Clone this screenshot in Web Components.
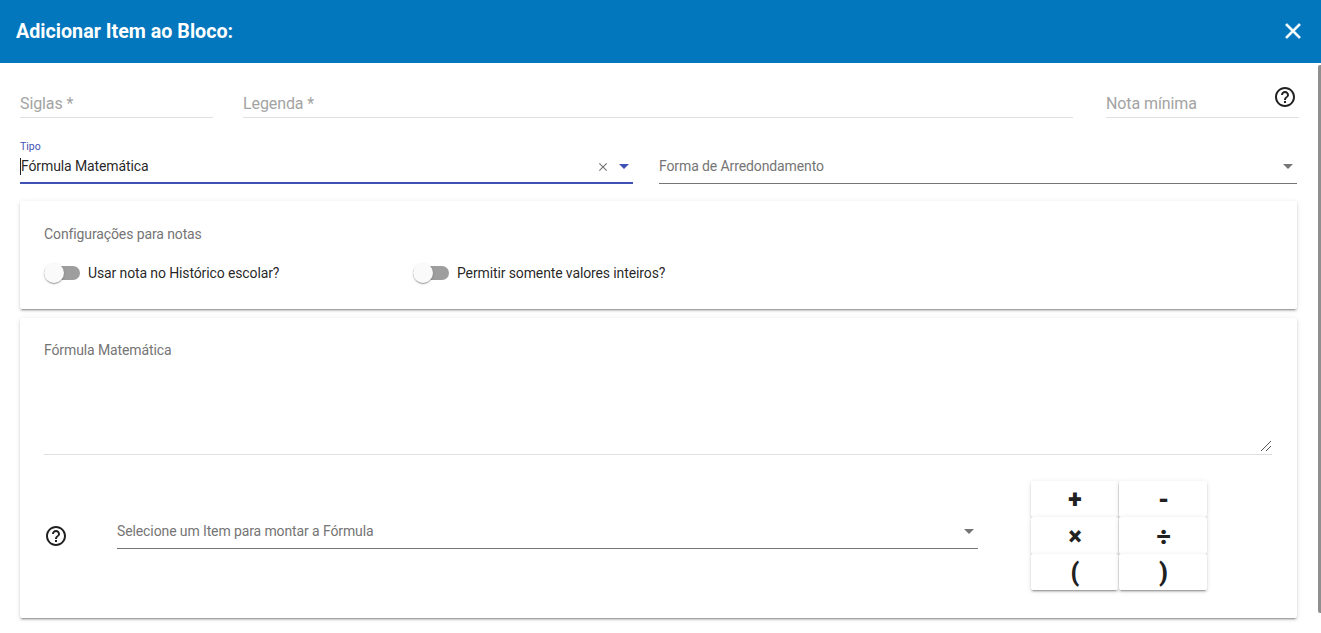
<!DOCTYPE html>
<html lang="pt">
<head>
<meta charset="utf-8">
<title>Adicionar Item ao Bloco</title>
<style>
  html, body { margin: 0; height: 100%; overflow: hidden; background: #fff; font-family: Roboto, "Liberation Sans", sans-serif; }
</style>
</head>
<body>
<item-dialog></item-dialog>

<script>
const HELP_PATH = 'M11 18h2v-2h-2v2zm1-16C6.48 2 2 6.48 2 12s4.48 10 10 10 10-4.48 10-10S17.52 2 12 2zm0 18c-4.41 0-8-3.59-8-8s3.59-8 8-8 8 3.59 8 8-3.59 8-8 8zm0-14c-2.21 0-4 1.79-4 4h2c0-1.1.9-2 2-2s2 .9 2 2c0 2-3 1.75-3 5h2c0-2.25 3-2.5 3-5 0-2.21-1.79-4-4-4z';

class HelpIcon extends HTMLElement {
  constructor(){
    super();
    this.attachShadow({mode:'open'});
    this.shadowRoot.innerHTML = `
      <style>
        :host{ display:block; width:24px; height:24px; }
        svg{ display:block; fill:rgba(0,0,0,.87); }
      </style>
      <svg width="24" height="24" viewBox="0 0 24 24"><path d="${HELP_PATH}"/></svg>`;
  }
}

class DialogBar extends HTMLElement {
  constructor(){
    super();
    this.attachShadow({mode:'open'});
    this.shadowRoot.innerHTML = `
      <style>
        :host{ display:flex; align-items:center; justify-content:space-between; height:63px; padding:0 15px 0 16px; background:#0277bd; color:#fff; }
        h2{ margin:-1px 0 0; font:700 19.7px Roboto, sans-serif; }
        svg{ display:block; fill:#fff; stroke:#fff; stroke-width:.5; margin-top:-1px; }
      </style>
      <h2><slot></slot></h2>
      <svg width="26" height="26" viewBox="0 0 24 24"><path d="M19 6.41L17.59 5 12 10.59 6.41 5 5 6.41 10.59 12 5 17.59 6.41 19 12 13.41 17.59 19 19 17.59 13.41 12z"/></svg>`;
  }
}

class TextField extends HTMLElement {
  constructor(){
    super();
    this.attachShadow({mode:'open'});
    this.shadowRoot.innerHTML = `
      <style>
        :host{ display:block; height:32px; border-bottom:1px solid #e0e0e0; box-sizing:content-box; color:#a3a3a3; font:16px/38px Roboto, sans-serif; letter-spacing:-.1px; }
        div{ height:32px; }
      </style>
      <div><slot></slot></div>`;
  }
}

class SelectField extends HTMLElement {
  constructor(){
    super();
    this.attachShadow({mode:'open'});
    const active = this.hasAttribute('active');
    const clear = active ? `<svg class="x" width="14" height="14" viewBox="0 0 24 24"><path d="M19 6.41L17.59 5 12 10.59 6.41 5 5 6.41 10.59 12 5 17.59 6.41 19 12 13.41 17.59 19 19 17.59 13.41 12z"/></svg>` : '';
    const label = this.getAttribute('label');
    this.shadowRoot.innerHTML = `
      <style>
        :host{ display:block; color:#757575; font:14px Roboto, sans-serif; letter-spacing:-.11px; }
        .top{ height:14px; padding-top:1px; margin-bottom:-1px; color:#3f51b5; font-size:10.5px; line-height:14px; letter-spacing:0; }
        .box{ display:flex; align-items:center; height:27px; padding-bottom:3px; border-bottom:1px solid #757575; }
        :host([active]) .box{ border-bottom:2px solid #3f51b5; height:27px; padding-bottom:2px; color:rgba(0,0,0,.87); }
        :host([active]) .text{ border-left:1px solid #222; margin-left:0; }
        .text{ flex:1; line-height:17px; min-width:0; }
        .x{ display:block; fill:#757575; margin-right:9px; }
        .arrow{ width:0; height:0; margin:0 4px 0 0; border:5px solid transparent; border-top-color:#757575; border-bottom-width:0; }
        :host([active]) .arrow{ border-top-color:#3f51b5; }
      </style>
      <div class="top">${label || ''}</div>
      <div class="box">
        <span class="text"><slot></slot></span>
        ${clear}
        <span class="arrow"></span>
      </div>`;
  }
}

class SwitchField extends HTMLElement {
  constructor(){
    super();
    this.attachShadow({mode:'open'});
    this.shadowRoot.innerHTML = `
      <style>
        :host{ display:inline-flex; align-items:center; height:20px; color:rgba(0,0,0,.87); font:14px Roboto, sans-serif; letter-spacing:-.12px; }
        .track{ position:relative; width:36px; height:14px; border-radius:7px; background:#9e9e9e; margin-right:8px; }
        .thumb{ position:absolute; left:0; top:-3px; width:20px; height:20px; border-radius:50%; background:#fafafa;
          box-shadow:0 2px 1px -1px rgba(0,0,0,.2),0 1px 1px 0 rgba(0,0,0,.14),0 1px 3px 0 rgba(0,0,0,.12); }
      </style>
      <span class="track"><span class="thumb"></span></span>
      <slot></slot>`;
  }
}

class PanelCard extends HTMLElement {
  constructor(){
    super();
    this.attachShadow({mode:'open'});
    this.shadowRoot.innerHTML = `
      <style>
        :host{ display:block; box-sizing:border-box; padding:24px; background:#fff; border-radius:2px;
          box-shadow:0 3px 1px -2px rgba(0,0,0,.2),0 2px 2px 0 rgba(0,0,0,.14),0 1px 5px 0 rgba(0,0,0,.12); }
        .title{ color:#757575; font:14px/17px Roboto, sans-serif; letter-spacing:-.11px; }
      </style>
      <div class="title">${this.getAttribute('heading')}</div>
      <slot></slot>`;
  }
}

class OpButtons extends HTMLElement {
  constructor(){
    super();
    this.attachShadow({mode:'open'});
    const ops = ['+','-','×','÷','(',')'];
    this.shadowRoot.innerHTML = `
      <style>
        :host{ display:grid; grid-template-columns:87px 88px; grid-auto-rows:36.4px; column-gap:1px; row-gap:0; width:176px; }
        button{ border:0; padding:1px 0 0 1px; background:#fff; border-radius:2px; color:#212121; font:900 25px/35px Roboto, sans-serif;
          box-shadow:0 3px 1px -2px rgba(0,0,0,.2),0 2px 2px 0 rgba(0,0,0,.14),0 1px 5px 0 rgba(0,0,0,.12); }
      </style>
      ${ops.map(o => `<button>${o}</button>`).join('')}`;
  }
}

class ItemDialog extends HTMLElement {
  constructor(){
    super();
    this.attachShadow({mode:'open'});
    this.shadowRoot.innerHTML = `
      <style>
        :host{ display:block; position:relative; height:633px; overflow:hidden; }
        .scroll{ position:absolute; right:0; top:65px; width:3px; height:548px; background:#8f8f8f; border-radius:2px 0 0 2px; }
        .body{ padding:22px 24px 0 20px; }
        .row1{ display:flex; align-items:flex-start; width:1279px; height:33px; }
        .siglas{ width:193px; margin-right:30px; }
        .legenda{ width:830px; margin-right:33px; }
        .nota{ width:193px; position:relative; }
        .nota help-icon{ position:absolute; right:2px; top:0; }
        .row2{ display:flex; margin-top:21px; height:45px; }
        .tipo{ width:613px; margin-right:26px; }
        .forma{ width:638px; }
        .cards{ margin-top:17px; display:flex; flex-direction:column; gap:9px; }
        .c1{ height:108px; padding-top:25px; }
        .c2{ height:300px; }
        .switches{ display:flex; margin-top:20px; }
        .switches switch-field:first-child{ width:369px; }
        .area{ position:relative; height:112px; border-bottom:1px solid #e0e0e0; margin-right:1px; margin-top:-17px; }
        .grip{ position:absolute; right:0; bottom:2px; display:block; }
        .pick{ display:flex; align-items:flex-start; margin-top:26px; }
        .pick help-icon{ margin:43px 49px 0 0; }
        .pick select-field{ width:861px; margin:23px 53px 0 0; }
      </style>
      <dialog-bar>Adicionar Item ao Bloco:</dialog-bar>
      <div class="body">
        <div class="row1">
          <text-field class="siglas">Siglas *</text-field>
          <text-field class="legenda">Legenda *</text-field>
          <div class="nota"><text-field>Nota mínima</text-field><help-icon></help-icon></div>
        </div>
        <div class="row2">
          <select-field class="tipo" active label="Tipo">Fórmula Matemática</select-field>
          <select-field class="forma">Forma de Arredondamento</select-field>
        </div>
        <div class="cards">
          <panel-card class="c1" heading="Configurações para notas">
            <div class="switches">
              <switch-field>Usar nota no Histórico escolar?</switch-field>
              <switch-field>Permitir somente valores inteiros?</switch-field>
            </div>
          </panel-card>
          <panel-card class="c2" heading="Fórmula Matemática">
            <div class="area">
              <svg class="grip" width="12" height="12" viewBox="0 0 12 12" fill="none" stroke="#555" stroke-width="1"><path d="M1 11L11 1M6 11L11 6"/></svg>
            </div>
            <div class="pick">
              <help-icon></help-icon>
              <select-field>Selecione um Item para montar a Fórmula</select-field>
              <op-buttons></op-buttons>
            </div>
          </panel-card>
        </div>
      </div>
      <div class="scroll"></div>`;
  }
}

customElements.define('help-icon', HelpIcon);
customElements.define('dialog-bar', DialogBar);
customElements.define('text-field', TextField);
customElements.define('select-field', SelectField);
customElements.define('switch-field', SwitchField);
customElements.define('panel-card', PanelCard);
customElements.define('op-buttons', OpButtons);
customElements.define('item-dialog', ItemDialog);
</script>
</body>
</html>
